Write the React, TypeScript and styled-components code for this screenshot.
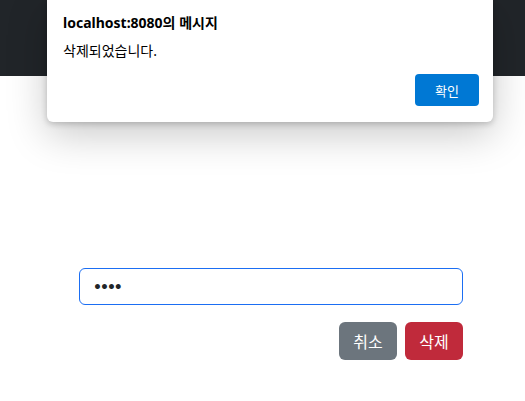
import React from "react"
import styled, { createGlobalStyle } from "styled-components"

const GlobalStyle = createGlobalStyle`
  html, body {
    margin: 0;
    padding: 0;
    background: #ffffff;
    font-family: "Noto Sans", "Noto Sans CJK KR", sans-serif;
  }
`

const Page = styled.div`
  position: relative;
  width: 525px;
  height: 401px;
  overflow: hidden;
`

const NavBar = styled.div`
  height: 76px;
  background: #212529;
`

const Content = styled.div`
  display: flex;
  flex-direction: column;
  align-items: flex-end;
  gap: 17px;
  width: 384px;
  margin: 192px 0 0 79px;
`

const PasswordInput = styled.input`
  box-sizing: border-box;
  width: 100%;
  height: 37px;
  padding: 6px 13px;
  border: 1px solid #1b6ef3;
  border-radius: 6px;
  font-size: 14px;
  font-weight: 700;
  color: #212529;
  outline: none;
  font-family: "DejaVu Sans", sans-serif;
  letter-spacing: -2px;
`

const ButtonRow = styled.div`
  display: flex;
  gap: 8px;
`

const Button = styled.button<{ $tone: "secondary" | "danger" }>`
  box-sizing: border-box;
  width: 58px;
  height: 38px;
  padding: 0;
  border: 1px solid transparent;
  border-radius: 6px;
  background: ${p => (p.$tone === "danger" ? "#c02a3b" : "#6c757d")};
  color: #ffffff;
  font-size: 16px;
  font-family: "Noto Sans CJK KR", sans-serif;
  cursor: pointer;
`

const Dialog = styled.div`
  position: absolute;
  left: 47px;
  top: 0;
  width: 446px;
  height: 122px;
  box-sizing: border-box;
  padding: 14px 14px 16px 16px;
  background: #ffffff;
  border-radius: 0 0 6px 6px;
  box-shadow: 0 12px 40px rgba(0, 0, 0, 0.22), 0 2px 6px rgba(0, 0, 0, 0.2);
  display: flex;
  flex-direction: column;
`

const DialogTitle = styled.div`
  font-size: 14px;
  font-weight: 700;
  color: #000000;
  line-height: 18px;
`

const DialogMessage = styled.div`
  margin-top: 10px;
  font-size: 14px;
  color: #000000;
  line-height: 18px;
`

const DialogFooter = styled.div`
  margin-top: auto;
  display: flex;
  justify-content: flex-end;
`

const ConfirmButton = styled.button`
  width: 64px;
  height: 32px;
  border: none;
  border-radius: 4px;
  background: #0078d4;
  color: #ffffff;
  font-size: 13px;
  font-family: "Noto Sans CJK KR", sans-serif;
`

const App = () => {
  return (
    <Page>
      <GlobalStyle />
      <NavBar />
      <Content>
        <PasswordInput type="password" defaultValue="1234" />
        <ButtonRow>
          <Button $tone="secondary">취소</Button>
          <Button $tone="danger">삭제</Button>
        </ButtonRow>
      </Content>
      <Dialog>
        <DialogTitle>localhost:8080의 메시지</DialogTitle>
        <DialogMessage>삭제되었습니다.</DialogMessage>
        <DialogFooter>
          <ConfirmButton>확인</ConfirmButton>
        </DialogFooter>
      </Dialog>
    </Page>
  )
}

export default App
